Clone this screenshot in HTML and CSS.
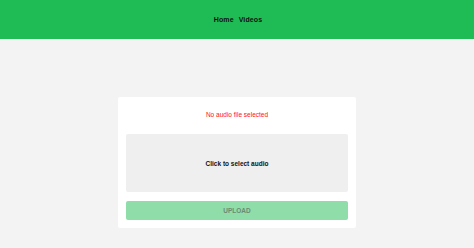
FILE: index.html
```html
<!DOCTYPE html>
<html>
<head>
<meta charset="utf-8">
<link rel="stylesheet" href="styles.css">
</head>
<body>
<header class="header">
  <nav class="nav">
    <a class="nav-link" href="#">Home</a>
    <a class="nav-link" href="#">Videos</a>
  </nav>
</header>
<main class="main">
  <section class="card">
    <p class="status">No audio file selected</p>
    <div class="drop">Click to select audio</div>
    <button class="upload" disabled>UPLOAD</button>
  </section>
</main>
</body>
</html>
```
FILE: styles.css
```css
* { box-sizing: border-box; }
html, body { margin: 0; padding: 0; }
body {
  background: #f3f3f3;
  font-family: "Liberation Sans", Arial, sans-serif;
  width: 474px;
  height: 248px;
  overflow: hidden;
}
.header {
  background: #1fbc55;
  height: 39px;
  display: flex;
  align-items: center;
  justify-content: center;
}
.nav {
  display: flex;
  gap: 5px;
  padding-left: 2px;
}
.nav-link {
  color: #111;
  text-decoration: none;
  font-weight: bold;
  font-size: 7px;
  letter-spacing: 0.1px;
}
.main {
  display: flex;
  justify-content: center;
  padding-top: 58px;
}
.card {
  background: #fff;
  width: 238px;
  border-radius: 2px;
  padding: 8px;
  display: flex;
  flex-direction: column;
}
.status {
  margin: 0;
  height: 29px;
  padding-top: 6px;
  line-height: 8px;
  text-align: center;
  color: #f11;
  font-size: 6.5px;
}
.drop {
  background: #efefef;
  height: 58px;
  border-radius: 2px;
  display: flex;
  align-items: center;
  justify-content: center;
  font-size: 6.5px;
  font-weight: bold;
  color: #111;
}
.upload {
  margin-top: 9px;
  height: 19px;
  border: none;
  border-radius: 2px;
  background: #8fdda8;
  color: #6c8a75;
  font-family: inherit;
  font-weight: bold;
  font-size: 6.5px;
  padding: 0;
}
```
